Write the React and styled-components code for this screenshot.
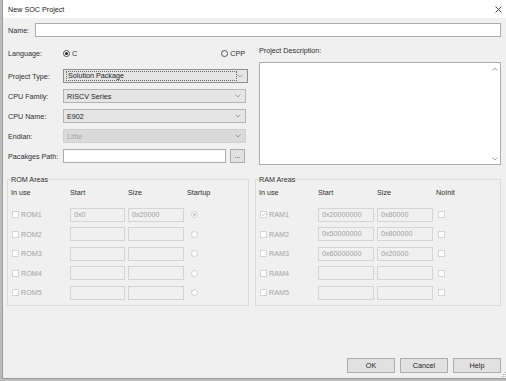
import styled, { createGlobalStyle } from "styled-components";

const GlobalStyle = createGlobalStyle`
  html, body {
    margin: 0;
    padding: 0;
  }
  body {
    background: #bcbcbc;
    font-family: "Liberation Sans", Arial, sans-serif;
    font-size: 7.2px;
    color: #2e2e2e;
  }
  * {
    box-sizing: border-box;
  }
`;

const romRows = [
  { name: "ROM1", start: "0x0", size: "0x20000", startup: true },
  { name: "ROM2", start: "", size: "" },
  { name: "ROM3", start: "", size: "" },
  { name: "ROM4", start: "", size: "" },
  { name: "ROM5", start: "", size: "" },
];

const ramRows = [
  { name: "RAM1", start: "0x20000000", size: "0x80000", used: true },
  { name: "RAM2", start: "0x50000000", size: "0x800000" },
  { name: "RAM3", start: "0x60000000", size: "0x20000" },
  { name: "RAM4", start: "", size: "" },
  { name: "RAM5", start: "", size: "" },
];

const Chevron = ({ up }) => (
  <svg width="6" height="4" viewBox="0 0 6 4">
    <path
      d={up ? "M0.5 3.5 L3 1 L5.5 3.5" : "M0.5 0.5 L3 3 L5.5 0.5"}
      fill="none"
      stroke="#9a9a9a"
      strokeWidth="0.9"
    />
  </svg>
);

const App = () => {
  return (
    <>
      <GlobalStyle />
      <Screen>
        <Window>
          <TitleBar>
            <Title>New SOC Project</Title>
            <svg width="7" height="7" viewBox="0 0 7 7">
              <path d="M0.5 0.5 L6.5 6.5 M6.5 0.5 L0.5 6.5" stroke="#333" strokeWidth="0.9" />
            </svg>
          </TitleBar>
          <Body>
            <NameRow>
              <NameLabel>Name:</NameLabel>
              <TextBox />
            </NameRow>

            <Columns>
              <LeftCol>
                <LangRow>
                  <FieldLabel>Language:</FieldLabel>
                  <RadioOption>
                    <RadioCircle $checked />C
                  </RadioOption>
                  <RadioOption $right>
                    <RadioCircle />CPP
                  </RadioOption>
                </LangRow>
                <FieldRow>
                  <FieldLabel>Project Type:</FieldLabel>
                  <Select $focused>
                    <FocusRing>Solution Package</FocusRing>
                    <Chevron />
                  </Select>
                </FieldRow>
                <FieldRow>
                  <FieldLabel>CPU Family:</FieldLabel>
                  <Select>
                    <SelectText>RISCV Series</SelectText>
                    <Chevron />
                  </Select>
                </FieldRow>
                <FieldRow>
                  <FieldLabel>CPU Name:</FieldLabel>
                  <Select>
                    <SelectText>E902</SelectText>
                    <Chevron />
                  </Select>
                </FieldRow>
                <FieldRow>
                  <FieldLabel>Endian:</FieldLabel>
                  <Select $disabled>
                    <SelectText>Little</SelectText>
                    <Chevron />
                  </Select>
                </FieldRow>
                <FieldRow>
                  <FieldLabel>Pacakges Path:</FieldLabel>
                  <PathBox />
                  <BrowseButton>...</BrowseButton>
                </FieldRow>
              </LeftCol>

              <RightCol>
                <DescLabel>Project Description:</DescLabel>
                <DescBox>
                  <ScrollTrack>
                    <Chevron up />
                    <Chevron />
                  </ScrollTrack>
                </DescBox>
              </RightCol>
            </Columns>

            <Groups>
              <GroupBox>
                <Legend>ROM Areas</Legend>
                <AreaGrid $cols="59px 58px 59px 1fr">
                  <HeadCell>In use</HeadCell>
                  <HeadCell>Start</HeadCell>
                  <HeadCell>Size</HeadCell>
                  <HeadCell>Startup</HeadCell>
                  {romRows.map((row) => (
                    <AreaRow key={row.name}>
                      <CheckLabel>
                        <CheckBox />
                        {row.name}
                      </CheckLabel>
                      <AreaInput $w={55}>{row.start}</AreaInput>
                      <AreaInput $w={56}>{row.size}</AreaInput>
                      <OptionCell $pad={4}>
                        <RadioCircle $checked={row.startup} $disabled />
                      </OptionCell>
                    </AreaRow>
                  ))}
                </AreaGrid>
              </GroupBox>

              <GroupBox>
                <Legend>RAM Areas</Legend>
                <AreaGrid $cols="59px 59px 59px 1fr">
                  <HeadCell>In use</HeadCell>
                  <HeadCell>Start</HeadCell>
                  <HeadCell>Size</HeadCell>
                  <HeadCell>NoInit</HeadCell>
                  {ramRows.map((row) => (
                    <AreaRow key={row.name}>
                      <CheckLabel>
                        <CheckBox>
                          {row.used && (
                            <svg width="7" height="7" viewBox="0 0 7 7">
                              <path d="M1 3.6 L2.8 5.3 L6 1.6" fill="none" stroke="#a8a8a8" strokeWidth="0.9" />
                            </svg>
                          )}
                        </CheckBox>
                        {row.name}
                      </CheckLabel>
                      <AreaInput $w={56}>{row.start}</AreaInput>
                      <AreaInput $w={56}>{row.size}</AreaInput>
                      <OptionCell $pad={2}>
                        <CheckBox />
                      </OptionCell>
                    </AreaRow>
                  ))}
                </AreaGrid>
              </GroupBox>
            </Groups>

            <Footer>
              <Button>OK</Button>
              <Button>Cancel</Button>
              <Button>Help</Button>
            </Footer>
          </Body>
          <Grip>
            <svg width="5" height="5" viewBox="0 0 5 5">
              <rect x="4" y="0" width="1" height="1" fill="#b0b0b0" />
              <rect x="2" y="2" width="1" height="1" fill="#b0b0b0" />
              <rect x="4" y="2" width="1" height="1" fill="#b0b0b0" />
              <rect x="0" y="4" width="1" height="1" fill="#b0b0b0" />
              <rect x="2" y="4" width="1" height="1" fill="#b0b0b0" />
              <rect x="4" y="4" width="1" height="1" fill="#b0b0b0" />
            </svg>
          </Grip>
        </Window>
      </Screen>
    </>
  );
};

const Screen = styled.div`
  width: 506px;
  height: 381px;
  padding: 0 0 2px 2px;
  display: flex;
`;

const Window = styled.div`
  position: relative;
  flex: 1;
  display: flex;
  flex-direction: column;
  background: #f0f0f0;
  border-left: 1px solid #9c9c9c;
  border-bottom: 1px solid #9c9c9c;
`;

const TitleBar = styled.div`
  height: 18px;
  background: #ffffff;
  display: flex;
  align-items: center;
  justify-content: space-between;
  padding: 0 6px 0 5px;
`;

const Title = styled.span`
  color: #1a1a1a;
`;

const Body = styled.div`
  flex: 1;
  display: flex;
  flex-direction: column;
  padding: 5px 7px 5px 5px;
`;

const NameRow = styled.div`
  display: flex;
  align-items: center;
  height: 14px;
`;

const NameLabel = styled.span`
  width: 27px;
`;

const TextBox = styled.div`
  flex: 1;
  height: 14px;
  background: #ffffff;
  border: 1px solid #acacac;
`;

const Columns = styled.div`
  display: grid;
  grid-template-columns: 238px 1fr;
  column-gap: 13px;
  margin-top: 9px;
`;

const LeftCol = styled.div`
  display: flex;
  flex-direction: column;
  gap: 6px;
`;

const FieldRow = styled.div`
  display: flex;
  align-items: center;
  height: 14px;
`;

const LangRow = styled(FieldRow)`
  margin-bottom: 3px;
`;

const FieldLabel = styled.span`
  width: 55px;
  flex-shrink: 0;
`;

const RadioOption = styled.span`
  display: flex;
  align-items: center;
  gap: 2px;
  margin-left: ${(p) => (p.$right ? "auto" : "0")};
  margin-right: ${(p) => (p.$right ? "1px" : "0")};
`;

const RadioCircle = styled.span`
  width: 7px;
  height: 7px;
  border-radius: 50%;
  border: 1px solid ${(p) => (p.$disabled ? "#cfcfcf" : "#4a4a4a")};
  background: #ffffff;
  display: flex;
  align-items: center;
  justify-content: center;
  &::after {
    content: "";
    width: 3px;
    height: 3px;
    border-radius: 50%;
    background: ${(p) => (p.$disabled ? "#c4c4c4" : "#222")};
    display: ${(p) => (p.$checked ? "block" : "none")};
  }
`;

const Select = styled.div`
  flex: 1;
  height: 14px;
  display: flex;
  align-items: center;
  justify-content: space-between;
  padding: 0 4px 0 2px;
  background: ${(p) => (p.$disabled ? "#dadada" : "#e5e5e5")};
  color: ${(p) => (p.$disabled ? "#a5a5a5" : "#222")};
  border: 1px solid ${(p) => (p.$focused ? "#8f8f8f" : p.$disabled ? "#d0d0d0" : "#b4b4b4")};
`;

const SelectText = styled.span`
  padding-left: 1px;
`;

const FocusRing = styled.span`
  width: 171px;
  height: 10px;
  line-height: 8px;
  padding-left: 1px;
  border: 1px dotted #6a6a6a;
`;

const PathBox = styled(TextBox)`
  flex: 0 0 163px;
`;

const BrowseButton = styled.div`
  margin-left: 4px;
  width: 15px;
  height: 14px;
  display: flex;
  align-items: flex-end;
  justify-content: center;
  padding-bottom: 3px;
  line-height: 6px;
  background: #e1e1e1;
  border: 1px solid #adadad;
`;

const RightCol = styled.div`
  display: flex;
  flex-direction: column;
`;

const DescLabel = styled.span`
  height: 10px;
  line-height: 10px;
  margin-bottom: 6px;
`;

const DescBox = styled.div`
  height: 103px;
  background: #ffffff;
  border: 1px solid #acacac;
  display: flex;
  justify-content: flex-end;
`;

const ScrollTrack = styled.div`
  width: 11px;
  display: flex;
  flex-direction: column;
  justify-content: space-between;
  align-items: center;
  padding: 4px 0 3px;
`;

const Groups = styled.div`
  display: grid;
  grid-template-columns: 242px 246px;
  column-gap: 6px;
  margin: 10px 0 0 -1px;
`;

const GroupBox = styled.fieldset`
  margin: 0;
  height: 131px;
  padding: 4px 0 0 3px;
  border: 1px solid #dcdcdc;
  min-width: 0;
`;

const Legend = styled.legend`
  padding: 0;
  line-height: 9px;
  color: #2e2e2e;
`;

const AreaGrid = styled.div`
  display: grid;
  grid-template-columns: ${(p) => p.$cols};
  grid-auto-rows: 14px;
  row-gap: 5.5px;
  align-items: center;
  & > :nth-child(-n + 4) {
    margin-bottom: 5.5px;
  }
`;

const HeadCell = styled.span`
  color: #2e2e2e;
`;

const AreaRow = styled.div`
  display: contents;
`;

const CheckLabel = styled.span`
  display: flex;
  align-items: center;
  gap: 2px;
  color: #a3a3a3;
  padding-left: 1px;
`;

const CheckBox = styled.span`
  width: 7px;
  height: 7px;
  border: 1px solid #d4d4d4;
  background: #ffffff;
  display: flex;
  align-items: center;
  justify-content: center;
`;

const AreaInput = styled.div`
  width: ${(p) => p.$w}px;
  height: 14px;
  line-height: 12px;
  padding-left: 3px;
  color: #a0a0a0;
  background: #f0f0f0;
  border: 1px solid #d4d4d4;
`;

const OptionCell = styled.div`
  display: flex;
  align-items: center;
  padding-left: ${(p) => p.$pad}px;
`;

const Footer = styled.div`
  margin-top: auto;
  display: flex;
  justify-content: flex-end;
  gap: 5px;
`;

const Button = styled.div`
  width: 48px;
  height: 15px;
  display: flex;
  align-items: center;
  justify-content: center;
  background: #e1e1e1;
  border: 1px solid #adadad;
  color: #222;
`;

const Grip = styled.div`
  position: absolute;
  right: 2px;
  bottom: 1px;
  line-height: 0;
`;

export default App;
